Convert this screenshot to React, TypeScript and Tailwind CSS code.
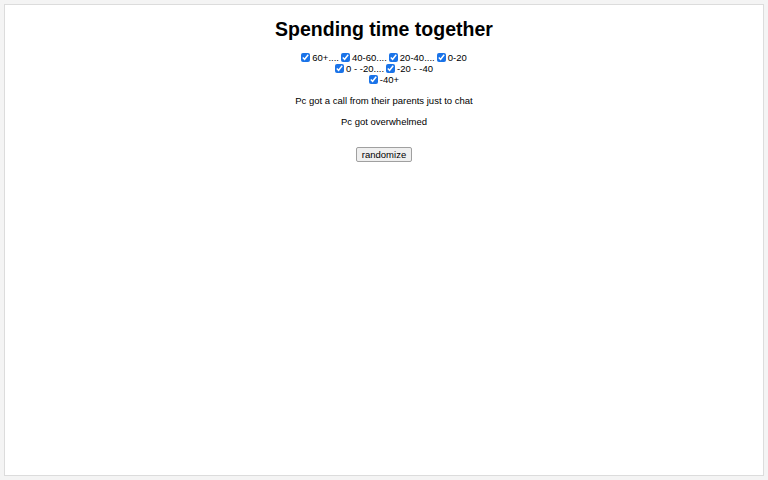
import React from "react";

const rows: string[][] = [
  ["60+....", "40-60....", "20-40....", "0-20"],
  ["0 - -20....", "-20 - -40"],
  ["-40+"],
];

export default function App() {
  return (
    <div className="w-[768px] h-[480px] bg-[#f4f4f4] p-[4px]" style={{ fontFamily: '"Liberation Sans", Arial, sans-serif' }}>
      <div className="h-[472px] w-[760px] bg-white border border-[#dcdcdc] flex flex-col items-center text-black">
        <h1 className="mt-[13px] text-[19.5px] leading-[22px] font-bold">Spending time together</h1>
        <div className="mt-[12px] flex flex-col items-center text-[9.5px] leading-[11px]">
          {rows.map((r, i) => (
            <div key={i} className="flex items-center">
              {r.map((l, j) => (
                <label key={j} className="flex items-center mr-[2px] last:mr-0">
                  <input type="checkbox" defaultChecked className="w-[9px] h-[9px] m-0 mr-[2px] accent-[#1a73e8]" />
                  <span>{l}</span>
                </label>
              ))}
            </div>
          ))}
        </div>
        <p className="mt-[10px] text-[9.5px] leading-[11px]">Pc got a call from their parents just to chat</p>
        <p className="mt-[10px] text-[9.5px] leading-[11px]">Pc got overwhelmed</p>
        <button className="mt-[20px] text-[9.5px] leading-[11px] px-[5px] py-[1px] bg-[#efefef] border border-[#a0a0a0] rounded-[2px]">randomize</button>
      </div>
    </div>
  );
}
